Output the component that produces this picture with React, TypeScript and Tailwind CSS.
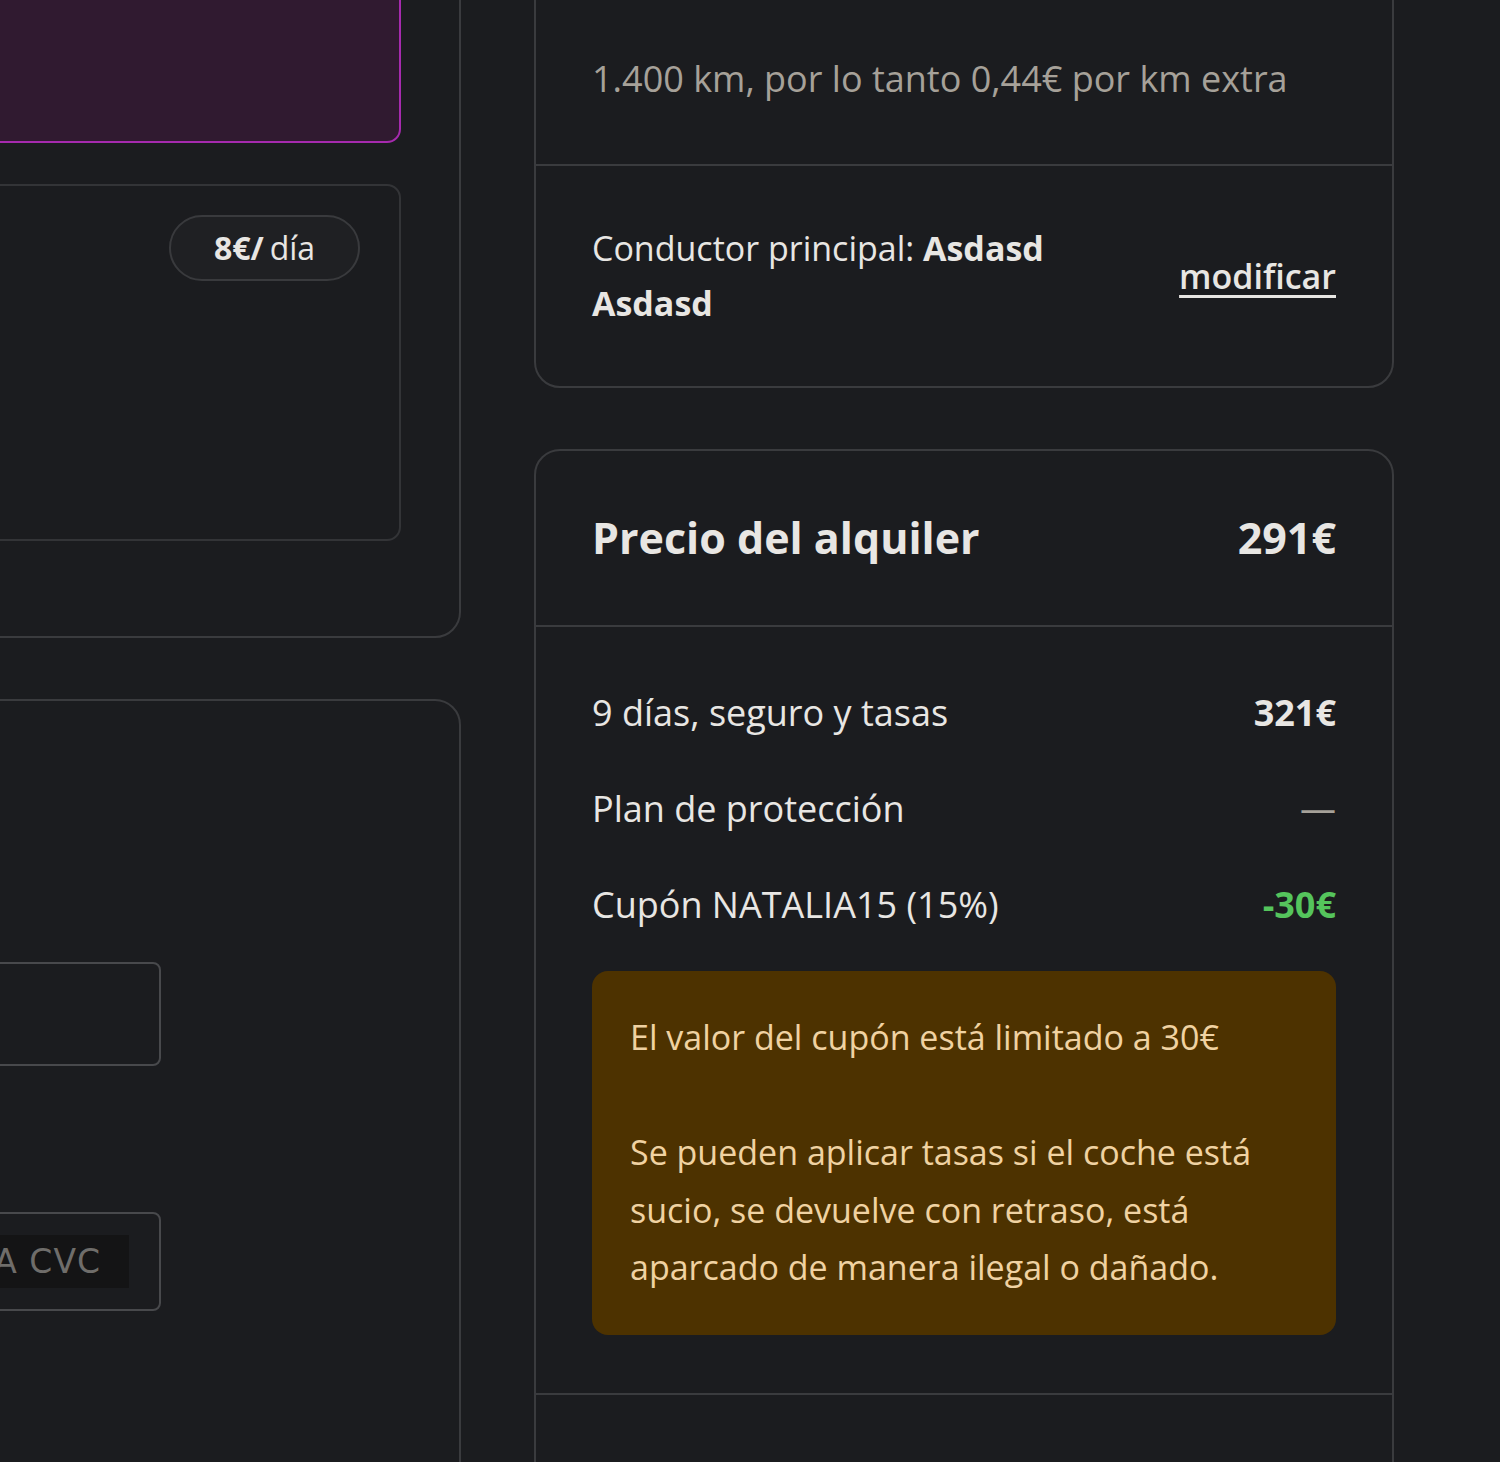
import React from 'react';

const font = { fontFamily: '"Open Sans", "Noto Sans", sans-serif' };

const Row = ({ label, value, valueClass }: { label: string; value: string; valueClass: string }) => (
  <div className="flex items-center justify-between text-[36px] leading-[56px]">
    <span>{label}</span>
    <span className={valueClass}>{value}</span>
  </div>
);

const App = () => {
  return (
    <div
      className="h-[1462px] w-[1500px] overflow-hidden bg-[#1b1c1f] text-[34px] text-[#e8e6e3]"
      style={font}
    >
      <div className="flex gap-[73px]">
        {/* left column, mostly scrolled off to the left */}
        <div className="-ml-[539px] -mt-[200px] flex w-[1000px] shrink-0 flex-col gap-[61px]">
          <div className="rounded-[26px] border-2 border-[#3a3b3e] pb-[95px] pl-[40px] pr-[58px] pt-[41px]">
            <div className="h-[300px] rounded-[14px] border-2 border-[#a62aae] bg-[#301a30]" />
            <div className="mt-[41px] flex h-[357px] justify-end rounded-[14px] border-2 border-[#333437] pr-[39px] pt-[29px]">
              <div className="flex h-[66px] w-[191px] items-center justify-center rounded-full border-2 border-[#393a3d] bg-[#1f2023] text-[32px]">
                <span className="font-bold">8€/</span>
                <span className="ml-[6px]">día</span>
              </div>
            </div>
          </div>

          <div className="h-[900px] rounded-[26px] border-2 border-[#3a3b3e] pl-[40px] pr-[298px] pt-[261px]">
            <div className="h-[104px] rounded-[8px] border-2 border-[#48494c]" />
            <div className="mt-[146px] flex h-[99px] items-center justify-end rounded-[8px] border-2 border-[#48494c] pr-[30px]">
              <div
                className="flex h-[53px] items-center bg-[#141415] pl-[20px] pr-[28px] text-[33px] tracking-[1px] text-[#6f6d6a]"
                style={{ fontFamily: '"DejaVu Sans", sans-serif' }}
              >
                MM / AA CVC
              </div>
            </div>
          </div>
        </div>

        {/* right column: summary */}
        <div className="-mt-[200px] flex w-[860px] shrink-0 flex-col gap-[61px]">
          <div className="rounded-[26px] border-2 border-[#3a3b3e]">
            <div className="border-b-2 border-[#3a3b3e] px-[56px] pb-[57px] pt-[249px] text-[36px] leading-[56px] text-[#a6a199]">
              1.400 km, por lo tanto 0,44€ por km extra
            </div>
            <div className="flex items-center justify-between px-[56px] py-[55px]">
              <div className="w-[520px] leading-[55px]">
                Conductor principal: <span className="font-bold">Asdasd Asdasd</span>
              </div>
              <a className="font-semibold underline underline-offset-[6px]">modificar</a>
            </div>
          </div>

          <div className="rounded-[26px] border-2 border-[#3a3b3e]">
            <div className="flex items-center justify-between border-b-2 border-[#3a3b3e] px-[56px] py-[57px] text-[43px] font-bold leading-[60px]">
              <span>Precio del alquiler</span>
              <span>291€</span>
            </div>
            <div className="flex flex-col gap-[40px] px-[56px] pb-[58px] pt-[58px]">
              <Row label="9 días, seguro y tasas" value="321€" valueClass="font-bold" />
              <Row label="Plan de protección" value="—" valueClass="text-[#a6a199]" />
              <Row label="Cupón NATALIA15 (15%)" value="-30€" valueClass="font-bold text-[#55c45c]" />
              <div className="-mt-[2px] rounded-[16px] bg-[#4d3200] px-[38px] py-[38px] leading-[57.5px] text-[#f0d2a2]">
                <p>El valor del cupón está limitado a 30€</p>
                <p className="mt-[57.5px]">
                  Se pueden aplicar tasas si el coche está
                  <br />
                  sucio, se devuelve con retraso, está
                  <br />
                  aparcado de manera ilegal o dañado.
                </p>
              </div>
            </div>
            <div className="h-[200px] border-t-2 border-[#3a3b3e]" />
          </div>
        </div>
      </div>
    </div>
  );
};

export default App;
